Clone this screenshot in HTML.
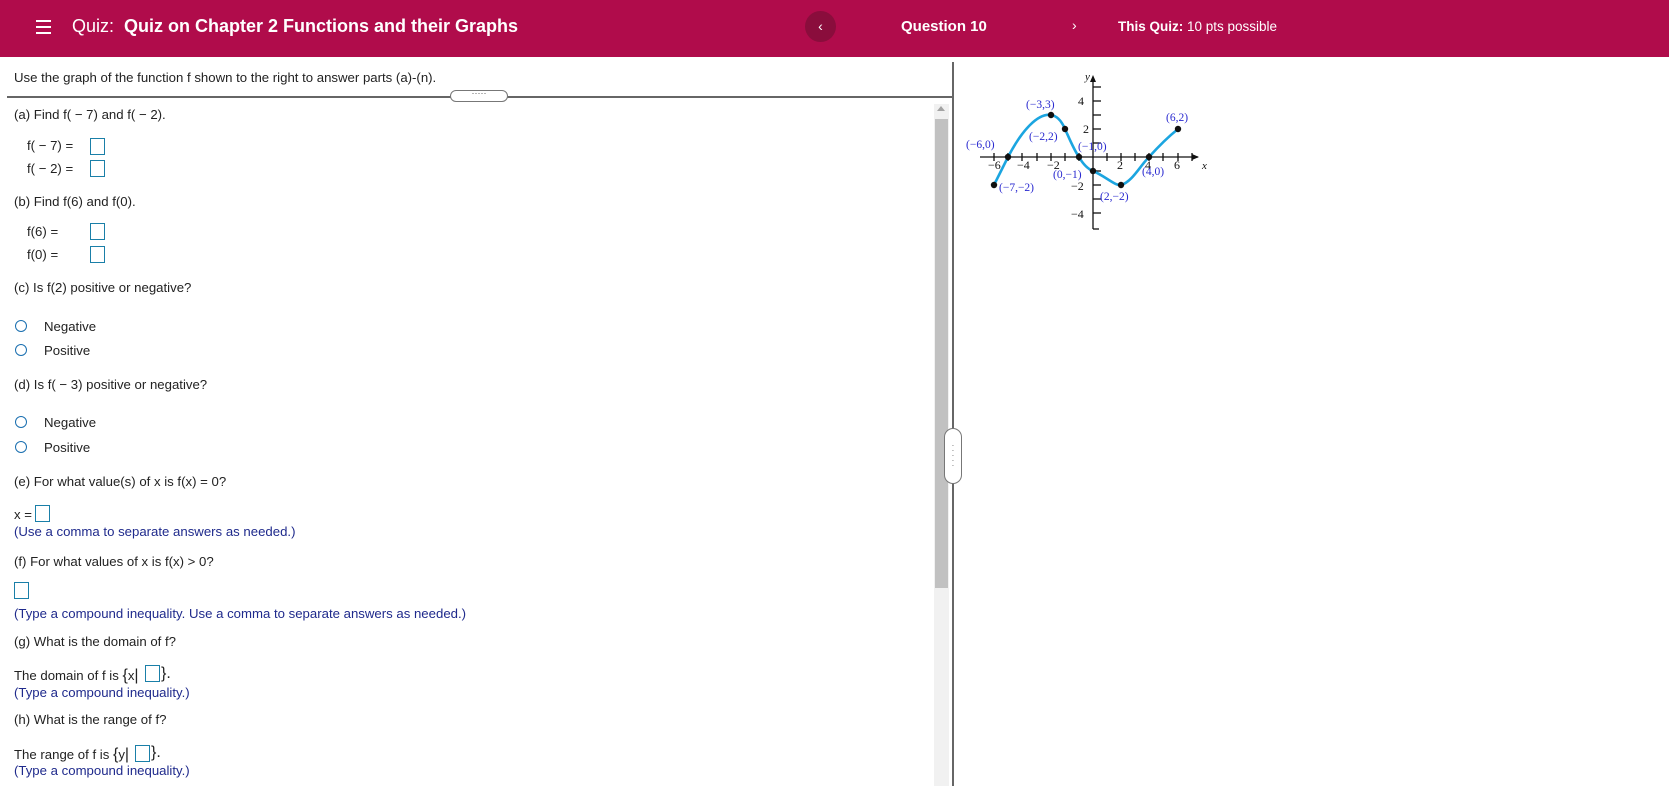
<!DOCTYPE html>
<html><head><meta charset="utf-8"><style>
body{margin:0;width:1669px;height:786px;overflow:hidden;background:#fff;font-family:"Liberation Sans",Arial,sans-serif;position:relative;color:#222}
.hdr{position:absolute;left:0;top:0;width:1669px;height:57px;background:#b00c4b;color:#fff}
.a{position:absolute;white-space:nowrap;font-size:13.2px}
.box{position:absolute;width:15px;height:17px;border:1.5px solid #1a7fa8;box-sizing:border-box}
.hint{color:#1f2a8c}
.rad{position:absolute;width:12px;height:12px;border:1.3px solid #1a6fb0;border-radius:50%;box-sizing:border-box}
</style></head><body>
<div class="hdr">
<div style="position:absolute;left:36px;top:20px;width:15px;height:2px;background:#fff;box-shadow:0 6px 0 #fff,0 12px 0 #fff"></div>
<div class="a" style="left:72px;top:16px;font-size:18px">Quiz:&nbsp; <b>Quiz on Chapter 2 Functions and their Graphs</b></div>
<div style="position:absolute;left:805px;top:11px;width:31px;height:31px;border-radius:50%;background:#8a0d3c;color:#fff;text-align:center;line-height:30px;font-size:14px">&lsaquo;</div>
<div class="a" style="left:901px;top:18px;font-size:15px;font-weight:bold">Question 10</div>
<div class="a" style="left:1072px;top:17px;font-size:14px">&rsaquo;</div>
<div class="a" style="left:1118px;top:19px;font-size:13.5px"><b>This Quiz:</b> 10 pts possible</div>
</div>
<div style="position:absolute;left:7px;top:96px;width:945px;height:1.5px;background:#666"></div>
<div style="position:absolute;left:450px;top:90px;width:58px;height:12px;border:1.5px solid #777;border-radius:7px;background:#fff;box-sizing:border-box;text-align:center;font-size:9px;line-height:4px;color:#555">·····</div>
<div style="position:absolute;left:934px;top:104px;width:15px;height:682px;background:#f1f1f1"></div>
<div style="position:absolute;left:935px;top:119px;width:13px;height:469px;background:#c1c1c1"></div>
<div style="position:absolute;left:937px;top:106px;width:0;height:0;border-left:4px solid transparent;border-right:4px solid transparent;border-bottom:5px solid #a3a3a3"></div>
<div style="position:absolute;left:952px;top:62px;width:2px;height:724px;background:#666"></div>
<div style="position:absolute;left:944px;top:428px;width:18px;height:56px;border:1.5px solid #777;border-radius:9px;background:#fff;box-sizing:border-box;text-align:center;font-size:8px;line-height:5px;padding-top:14px;color:#555">·<br>·<br>·<br>·<br>·</div>

<div class="a" style="left:14px;top:70px">Use the graph of the function f shown to the right to answer parts (a)-(n).</div>
<div class="a" style="left:14px;top:107px">(a) Find f( − 7) and f( − 2).</div>
<div class="a" style="left:27px;top:138px">f( − 7) =</div><div class="box" style="left:90px;top:138px"></div>
<div class="a" style="left:27px;top:161px">f( − 2) =</div><div class="box" style="left:90px;top:160px"></div>
<div class="a" style="left:14px;top:194px">(b) Find f(6) and f(0).</div>
<div class="a" style="left:27px;top:224px">f(6) =</div><div class="box" style="left:90px;top:223px"></div>
<div class="a" style="left:27px;top:247px">f(0) =</div><div class="box" style="left:90px;top:246px"></div>
<div class="a" style="left:14px;top:280px">(c) Is f(2) positive or negative?</div>
<div class="rad" style="left:15px;top:320px"></div><div class="a" style="left:44px;top:319px">Negative</div>
<div class="rad" style="left:15px;top:344px"></div><div class="a" style="left:44px;top:343px">Positive</div>
<div class="a" style="left:14px;top:377px">(d) Is f( − 3) positive or negative?</div>
<div class="rad" style="left:15px;top:416px"></div><div class="a" style="left:44px;top:415px">Negative</div>
<div class="rad" style="left:15px;top:441px"></div><div class="a" style="left:44px;top:440px">Positive</div>
<div class="a" style="left:14px;top:474px">(e) For what value(s) of x is f(x) = 0?</div>
<div class="a" style="left:14px;top:507px">x =</div><div class="box" style="left:35px;top:505px"></div>
<div class="a hint" style="left:14px;top:524px">(Use a comma to separate answers as needed.)</div>
<div class="a" style="left:14px;top:554px">(f) For what values of x is f(x) &gt; 0?</div>
<div class="box" style="left:14px;top:582px"></div>
<div class="a hint" style="left:14px;top:606px">(Type a compound inequality. Use a comma to separate answers as needed.)</div>
<div class="a" style="left:14px;top:634px">(g) What is the domain of f?</div>
<div class="a" style="left:14px;top:667px">The domain of f is <span style="font-size:16px">{</span>x<span style="font-size:16px">|</span></div><div class="box" style="left:145px;top:665px"></div><div class="a" style="left:161px;top:665px;font-size:16px">}.</div>
<div class="a hint" style="left:14px;top:685px">(Type a compound inequality.)</div>
<div class="a" style="left:14px;top:712px">(h) What is the range of f?</div>
<div class="a" style="left:14px;top:746px">The range of f is <span style="font-size:16px">{</span>y<span style="font-size:16px">|</span></div><div class="box" style="left:135px;top:745px"></div><div class="a" style="left:151px;top:744px;font-size:16px">}.</div>
<div class="a hint" style="left:14px;top:763px">(Type a compound inequality.)</div>

<svg style="position:absolute;left:0;top:0" width="1669" height="786" font-family="Liberation Serif,serif">
<g stroke="#111" stroke-width="1.3">
<line x1="980" y1="157" x2="1198" y2="157"/>
<line x1="1093" y1="229" x2="1093" y2="78"/>
<line x1="1093" y1="229" x2="1099" y2="229"/>
<g>
<line x1="994" y1="153" x2="994" y2="161"/><line x1="1008" y1="153" x2="1008" y2="161"/><line x1="1022" y1="153" x2="1022" y2="161"/><line x1="1037" y1="153" x2="1037" y2="161"/><line x1="1051" y1="153" x2="1051" y2="161"/><line x1="1065" y1="153" x2="1065" y2="161"/><line x1="1079" y1="153" x2="1079" y2="161"/><line x1="1107" y1="153" x2="1107" y2="161"/><line x1="1121" y1="153" x2="1121" y2="161"/><line x1="1135" y1="153" x2="1135" y2="161"/><line x1="1149" y1="153" x2="1149" y2="161"/><line x1="1163" y1="153" x2="1163" y2="161"/><line x1="1178" y1="153" x2="1178" y2="161"/><line x1="1192" y1="153" x2="1192" y2="161"/>
<line x1="1093" y1="87" x2="1101" y2="87"/><line x1="1093" y1="101" x2="1101" y2="101"/><line x1="1093" y1="115" x2="1101" y2="115"/><line x1="1093" y1="129" x2="1101" y2="129"/><line x1="1093" y1="143" x2="1101" y2="143"/><line x1="1093" y1="171" x2="1101" y2="171"/><line x1="1093" y1="185" x2="1101" y2="185"/><line x1="1093" y1="199" x2="1101" y2="199"/><line x1="1093" y1="213" x2="1101" y2="213"/>
</g></g>
<polygon points="1199,157 1192,154 1192,160" fill="#111"/>
<polygon points="1093,75 1090,82 1096,82" fill="#111"/>
<g font-size="12" fill="#111">
<text x="1085" y="80" font-style="italic" font-size="11">y</text>
<text x="1202" y="169" font-style="italic" font-size="11">x</text>
<text x="988" y="169">−6</text><text x="1017" y="169">−4</text><text x="1047" y="169">−2</text><text x="1117" y="169">2</text><text x="1145" y="169">4</text><text x="1174" y="169">6</text>
<text x="1078" y="105">4</text><text x="1083" y="133">2</text><text x="1071" y="190">−2</text><text x="1071" y="218">−4</text>
</g>
<path d="M994,185 L1008,157 C1022,130 1038,113 1051,115 C1058,116 1062,122 1065,129 C1070,140 1074,150 1079,157 C1083,164 1088,169 1093,171 C1105,176 1115,186 1121,185 C1132,182 1140,166 1149,157 C1158,147 1168,137 1178,129" fill="none" stroke="#1ba5e0" stroke-width="2.6"/>
<g fill="#111"><circle cx="994" cy="185" r="3.2"/><circle cx="1008" cy="157" r="3.2"/><circle cx="1051" cy="115" r="3.2"/><circle cx="1065" cy="129" r="3.2"/><circle cx="1079" cy="157" r="3.2"/><circle cx="1093" cy="171" r="3.2"/><circle cx="1121" cy="185" r="3.2"/><circle cx="1149" cy="157" r="3.2"/><circle cx="1178" cy="129" r="3.2"/></g>
<g font-size="11.5" fill="#2a2ad0">
<text x="1026" y="108">(−3,3)</text><text x="1029" y="140">(−2,2)</text><text x="966" y="148">(−6,0)</text>
<text x="1078" y="150">(−1,0)</text><text x="1053" y="178">(0,−1)</text><text x="999" y="191">(−7,−2)</text>
<text x="1100" y="200">(2,−2)</text><text x="1142" y="175">(4,0)</text><text x="1166" y="121">(6,2)</text>
</g>
</svg>
</body></html>
